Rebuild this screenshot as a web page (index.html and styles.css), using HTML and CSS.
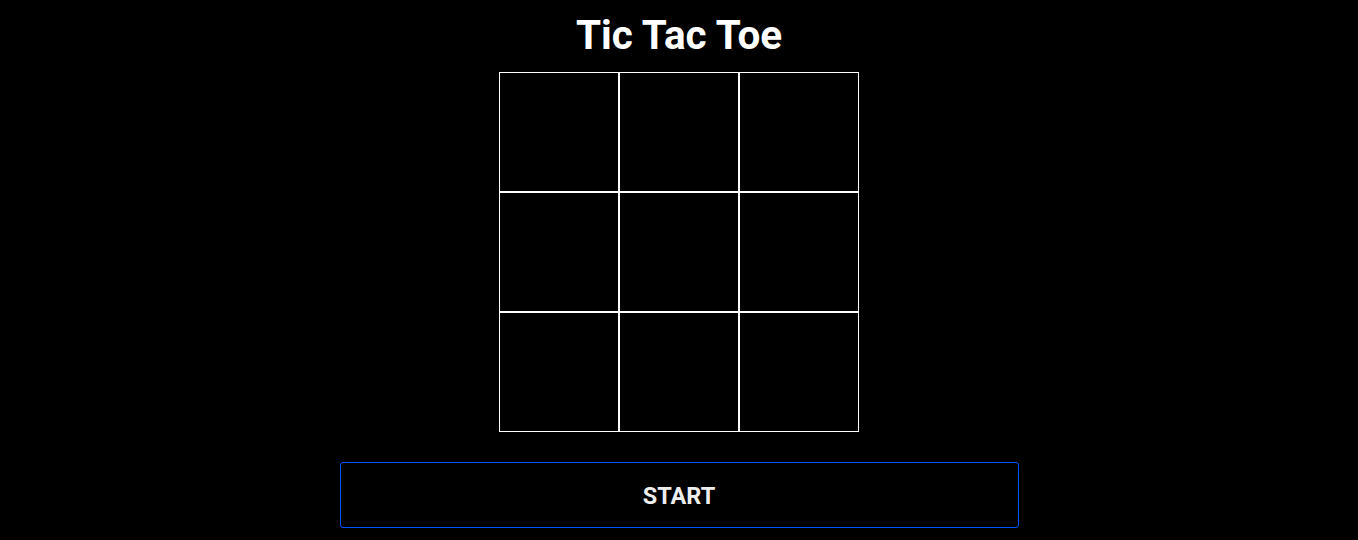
FILE: index.html
```html
<!DOCTYPE html>
<html>
<head>
<meta charset="utf-8">
<title>Tic Tac Toe</title>
<link rel="stylesheet" href="styles.css">
</head>
<body>
<main class="app">
  <h1 class="title">Tic Tac Toe</h1>
  <div class="board">
    <div class="cell"></div><div class="cell"></div><div class="cell"></div>
    <div class="cell"></div><div class="cell"></div><div class="cell"></div>
    <div class="cell"></div><div class="cell"></div><div class="cell"></div>
  </div>
  <button class="start">START</button>
</main>
</body>
</html>
```
FILE: styles.css
```css
html, body {
  margin: 0;
  padding: 0;
  background: #000;
}
body {
  font-family: Roboto, "Liberation Sans", Arial, sans-serif;
  color: #fff;
}
.app {
  display: flex;
  flex-direction: column;
  align-items: center;
}
.title {
  font-size: 40.5px;
  font-weight: 700;
  line-height: 47px;
  margin: 12px 0 13px;
}
.board {
  display: grid;
  grid-template-columns: repeat(3, 120px);
  grid-template-rows: repeat(3, 120px);
}
.cell {
  border: 1px solid #fff;
  box-sizing: border-box;
}
.start {
  margin-top: 30px;
  width: 50%;
  height: 66px;
  padding: 2px 0 0;
  background: #000;
  border: 1px solid #0055ff;
  border-radius: 3px;
  color: #eee;
  font-family: Roboto, "Liberation Sans", Arial, sans-serif;
  font-weight: 700;
  font-size: 23.5px;
  cursor: pointer;
}
```
